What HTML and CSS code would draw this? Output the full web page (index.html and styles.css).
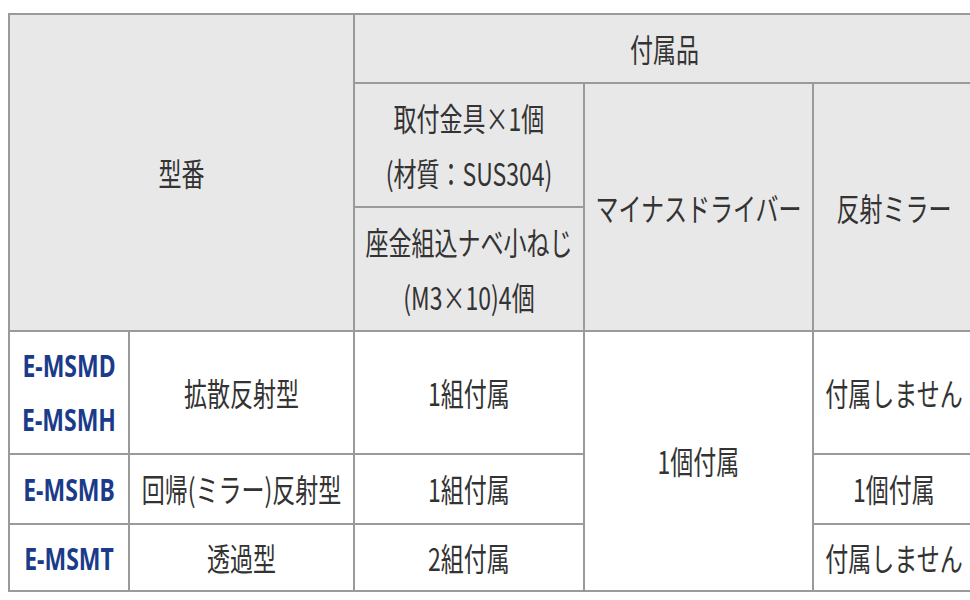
FILE: index.html
```html
<!DOCTYPE html>
<html lang="ja">
<head>
<meta charset="utf-8">
<title>付属品</title>
<link rel="stylesheet" href="styles.css">
</head>
<body>
<table class="spec">
  <colgroup>
    <col class="c1"><col class="c2"><col class="c3"><col class="c4"><col class="c5">
  </colgroup>
  <thead>
    <tr class="h1">
      <th colspan="2" rowspan="3"><span class="s">型番</span></th>
      <th colspan="3"><span class="s">付属品</span></th>
    </tr>
    <tr class="h2">
      <th><span class="s">取付金具×1個</span><br><span class="s">(材質：SUS304)</span></th>
      <th rowspan="2"><span class="s">マイナスドライバー</span></th>
      <th rowspan="2"><span class="s">反射ミラー</span></th>
    </tr>
    <tr class="h3">
      <th><span class="s">座金組込ナベ小ねじ</span><br><span class="s">(M3×10)4個</span></th>
    </tr>
  </thead>
  <tbody>
    <tr>
      <td class="model"><span class="s">E-MSMD</span><br><span class="s">E-MSMH</span></td>
      <td><span class="s">拡散反射型</span></td>
      <td><span class="s">1組付属</span></td>
      <td rowspan="3"><span class="s">1個付属</span></td>
      <td><span class="s">付属しません</span></td>
    </tr>
    <tr>
      <td class="model"><span class="s">E-MSMB</span></td>
      <td><span class="s">回帰(ミラー)反射型</span></td>
      <td><span class="s">1組付属</span></td>
      <td><span class="s">1個付属</span></td>
    </tr>
    <tr class="last">
      <td class="model"><span class="s">E-MSMT</span></td>
      <td><span class="s">透過型</span></td>
      <td><span class="s">2組付属</span></td>
      <td><span class="s">付属しません</span></td>
    </tr>
  </tbody>
</table>
</body>
</html>
```
FILE: styles.css
```css
html, body {
  background: #ffffff;
}
body {
  margin: 13px 0 0 8px;
  overflow: hidden;
  font-family: "Noto Sans CJK JP", "Noto Sans", sans-serif;
  font-size: 23px;
  color: #333333;
}
.spec {
  border-collapse: collapse;
  table-layout: fixed;
  width: 966px;
}
.c1 { width: 120px; }
.c2 { width: 225px; }
.c3 { width: 230px; }
.c4 { width: 229px; }
.c5 { width: 162px; }
.spec th,
.spec td {
  border: 2px solid #9a9a9a;
  padding: 6px 2px;
  line-height: 55px;
  text-align: center;
  vertical-align: middle;
  white-space: nowrap;
  font-weight: normal;
}
.spec th {
  background: #e8e8e8;
}
.spec td {
  background: #ffffff;
  padding-top: 6px;
  padding-bottom: 7px;
}
.s {
  display: inline-block;
  transform: scaleY(1.38);
}
.spec td.model {
  color: #1a3b8a;
  font-family: "Noto Sans", "Open Sans", sans-serif;
  font-weight: 700;
  line-height: 54px;
}
.model .s {
  transform: scaleY(1.3);
}
.spec .last td {
  padding-top: 5px;
  padding-bottom: 5px;
}
```
